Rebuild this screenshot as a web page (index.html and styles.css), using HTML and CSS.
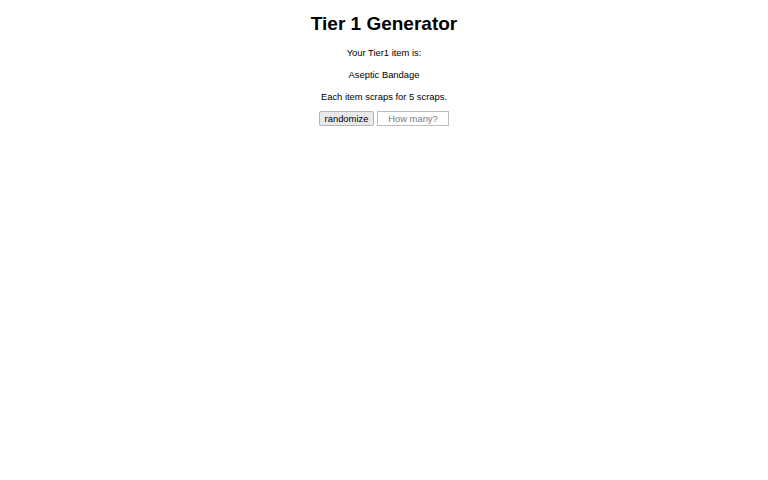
FILE: index.html
```html
<!DOCTYPE html>
<html>
<head>
<meta charset="utf-8">
<link rel="stylesheet" href="styles.css">
</head>
<body>
<div class="page">
  <h1 class="title">Tier 1 Generator</h1>
  <p class="line">Your Tier1 item is:</p>
  <p class="line">Aseptic Bandage</p>
  <p class="line note">Each item scraps for 5 scraps.</p>
  <div class="controls">
    <button class="btn">randomize</button>
    <input class="count" type="text" placeholder="How many?">
  </div>
</div>
</body>
</html>
```
FILE: styles.css
```css
html, body {
  margin: 0;
  background: #fff;
}
.page {
  font-family: "Liberation Sans", Arial, sans-serif;
  font-size: 9.4px;
  color: #000;
  text-align: center;
  padding-top: 13px;
}
.title {
  font-size: 19px;
  font-weight: bold;
  margin: 0 0 12px;
  line-height: 22px;
}
.line {
  margin: 0 0 11px;
  line-height: 11px;
}
.note {
  margin-bottom: 9px;
}
.controls {
  display: flex;
  justify-content: center;
  gap: 3px;
}
.btn {
  font-family: "Liberation Sans", Arial, sans-serif;
  font-size: 9.4px;
  width: 55px;
  height: 15px;
  padding: 0;
  background: #e9e9e9;
  border: 1px solid #b5b5b5;
  border-radius: 2px;
  color: #000;
}
.count {
  font-family: "Liberation Sans", Arial, sans-serif;
  font-size: 9.4px;
  width: 72px;
  height: 15px;
  box-sizing: border-box;
  padding: 0 2px;
  border: 1px solid #bdbdbd;
  text-align: center;
}
.count::placeholder {
  color: #7a7a7a;
}
```
